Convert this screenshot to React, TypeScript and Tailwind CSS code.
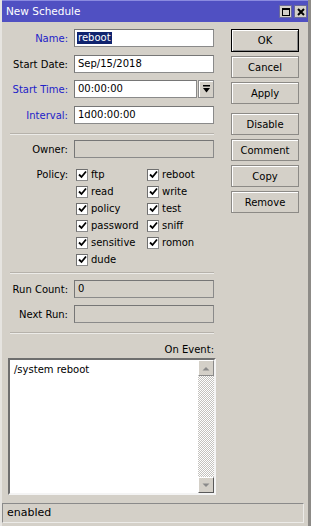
import React from "react";

const font = { fontFamily: '"DejaVu Sans", Verdana, sans-serif' };

function Field({ label, blue, value, disabled, selected, width = "w-[140px]", children }: { label: string; blue?: boolean; value?: string; disabled?: boolean; selected?: boolean; width?: string; children?: React.ReactNode }) {
  return (
    <div className="flex items-center h-[18px]">
      <div className={`w-[66px] pr-[6px] text-right whitespace-nowrap ${blue ? "text-[#2222c8]" : "text-black"}`}>{label}</div>
      <div className={`${width} h-[18px] border border-[#8a8a8a] border-t-[#767676] border-l-[#767676] ${disabled ? "bg-[#d4d0c8]" : "bg-white"} flex items-center pl-[2px] leading-none`}>
        {selected ? <span className="bg-[#10236e] text-white px-[1px] py-[1px]">{value}</span> : <span className="pl-[1px]">{value}</span>}
      </div>
      {children}
    </div>
  );
}

function Sep() {
  return <div className="h-[2px] w-[204px] ml-[2px] border-t border-[#b6b2ab] border-b border-b-[#ecebe8]" />;
}

function Check({ label }: { label: string }) {
  return (
    <div className="flex items-center h-[17px]">
      <div className="w-[12px] h-[12px] bg-white border border-[#8c8c8c] border-t-[#6f6f6f] border-l-[#6f6f6f] flex items-center justify-center">
        <svg width="9" height="9" viewBox="0 0 9 9"><path d="M1 4.5 L3.5 7 L8 1.5" fill="none" stroke="#000" strokeWidth="1.8" /></svg>
      </div>
      <span className="ml-[3px] whitespace-nowrap">{label}</span>
    </div>
  );
}

function Btn({ label, def }: { label: string; def?: boolean }) {
  return (
    <div className={`w-[68px] ${def ? "h-[23px]" : "h-[22px]"} flex items-center justify-center border ${def ? "border-black shadow-[inset_1px_1px_0_#ffffff,inset_-1px_-1px_0_#8a8a8a]" : "border-[#8c8a86] shadow-[inset_1px_1px_0_#ffffff]"} bg-[#d4d0c8] text-black`}>
      {label}
    </div>
  );
}

export default function App() {
  return (
    <div className="w-[311px] h-[526px] bg-[#d4d0c8] text-[10px] text-black relative overflow-hidden border-r-[3px] border-r-[#8d8b87] border-l-[2px] border-l-[#e6e4e0]" style={font}>
      <div className="h-[22px] bg-[#5050c2] border-t border-t-[#8a8ae0] flex items-center justify-between pl-[6px] pr-[4px] -ml-[2px] -mr-[3px]">
        <span className="text-white text-[10.5px]">New Schedule</span>
        <div className="flex gap-[2px]">
          <div className="w-[13px] h-[13px] bg-[#d4d0c8] border border-[#6a6a9a] flex items-center justify-center">
            <div className="w-[8px] h-[8px] border border-black border-t-2" />
          </div>
          <div className="w-[13px] h-[13px] bg-[#d4d0c8] border border-[#6a6a9a] flex items-center justify-center">
            <svg width="8" height="8" viewBox="0 0 8 8"><path d="M1 1 L7 7 M7 1 L1 7" stroke="#000" strokeWidth="2" /></svg>
          </div>
        </div>
      </div>
      <div className="flex">
        <div className="w-[208px] ml-[6px] flex flex-col">
          <div className="mt-[7px]"><Field label="Name:" blue value="reboot" selected /></div>
          <div className="mt-[8px]"><Field label="Start Date:" value="Sep/15/2018" /></div>
          <div className="mt-[7px]">
            <Field label="Start Time:" blue value="00:00:00" width="w-[123px]">
              <div className="ml-[1px] w-[16px] h-[18px] bg-[#d4d0c8] border border-[#8a8a8a] shadow-[inset_1px_1px_0_#ffffff] flex items-center justify-center">
                <svg width="9" height="9" viewBox="0 0 9 9"><rect x="1" y="0" width="7" height="1.5" fill="#000" /><path d="M1 3 H8 L4.5 7.5 Z" fill="#000" /></svg>
              </div>
            </Field>
          </div>
          <div className="mt-[8px]"><Field label="Interval:" blue value="1d00:00:00" /></div>
          <div className="mt-[9px]"><Sep /></div>
          <div className="mt-[5px]"><Field label="Owner:" disabled /></div>
          <div className="mt-[8px] flex">
            <div className="w-[66px] pr-[6px] text-right h-[17px] flex items-center justify-end">Policy:</div>
            <div className="ml-[2px] flex">
              <div className="w-[71px] flex flex-col">
                <Check label="ftp" />
                <Check label="read" />
                <Check label="policy" />
                <Check label="password" />
                <Check label="sensitive" />
                <Check label="dude" />
              </div>
              <div className="flex flex-col">
                <Check label="reboot" />
                <Check label="write" />
                <Check label="test" />
                <Check label="sniff" />
                <Check label="romon" />
              </div>
            </div>
          </div>
          <div className="mt-[4px]"><Sep /></div>
          <div className="mt-[6px]"><Field label="Run Count:" value="0" disabled /></div>
          <div className="mt-[7px]"><Field label="Next Run:" disabled /></div>
          <div className="mt-[9px]"><Sep /></div>
          <div className="mt-[10px] h-[12px] leading-[12px] text-right pr-[2px]">On Event:</div>
          <div className="mt-[2px] w-[208px] h-[137px] bg-white border-2 border-t-[#6e6e6e] border-l-[#6e6e6e] border-b-[#f4f4f4] border-r-[#f4f4f4] flex">
            <div className="flex-1 pl-[4px] pt-[2px]">/system reboot</div>
            <div className="w-[16px] flex flex-col bg-[repeating-conic-gradient(#c4c2be_0%_25%,#ffffff_0%_50%)] bg-[length:2px_2px]">
              <div className="h-[16px] bg-[#d4d0c8] border border-[#8a8a8a] border-t-white border-l-white flex items-center justify-center">
                <svg width="8" height="5" viewBox="0 0 8 5"><path d="M0.5 4.5 L4 1 L7.5 4.5 Z" fill="#8a8a8a" /></svg>
              </div>
              <div className="flex-1" />
              <div className="h-[16px] bg-[#d4d0c8] border border-[#5a5a5a] border-t-white border-l-white flex items-center justify-center">
                <svg width="8" height="5" viewBox="0 0 8 5"><path d="M0.5 0.5 L4 4 L7.5 0.5 Z" fill="#8a8a8a" /></svg>
              </div>
            </div>
          </div>
        </div>
        <div className="ml-[15px] mt-[7px] flex flex-col gap-[4px]">
          <Btn label="OK" def />
          <Btn label="Cancel" />
          <Btn label="Apply" />
          <div className="h-[1px]" />
          <Btn label="Disable" />
          <Btn label="Comment" />
          <Btn label="Copy" />
          <Btn label="Remove" />
        </div>
      </div>
      <div className="mt-[8px] w-[302px] h-[20px] border border-t-[#8a8a8a] border-l-[#8a8a8a] border-b-[#ecebe8] border-r-[#ecebe8] flex items-center pl-[4px] text-[11px]">enabled</div>
    </div>
  );
}
